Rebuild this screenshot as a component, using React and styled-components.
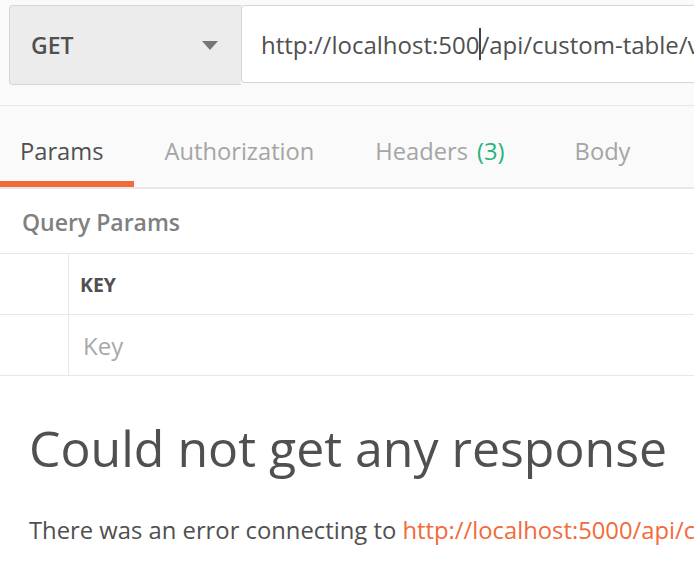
import React from "react";
import styled, { createGlobalStyle } from "styled-components";

const Global = createGlobalStyle`
  html, body { margin: 0; padding: 0; background: #ffffff; }
  body { font-family: "Open Sans", "Noto Sans", sans-serif; color: #505050; overflow: hidden; }
  * { box-sizing: border-box; }
`;

const Page = styled.div`
  width: 694px;
  height: 564px;
  overflow: hidden;
  background: #ffffff;
`;

const TopBar = styled.div`
  display: flex;
  align-items: flex-start;
  height: 106px;
  padding: 5px 0 0 9px;
  background: #fafafa;
  border-bottom: 1px solid #e6e6e6;
`;

const MethodSelect = styled.div`
  width: 232px;
  height: 80px;
  display: flex;
  align-items: center;
  justify-content: space-between;
  padding: 0 23px 0 21px;
  background: #ececec;
  border: 1px solid #d6d6d6;
  border-right: none;
  border-radius: 4px 0 0 4px;
  font-size: 23px;
  font-weight: 600;
  color: #505050;
`;

const Caret = styled.span`
  width: 0;
  height: 0;
  border-left: 8px solid transparent;
  border-right: 8px solid transparent;
  border-top: 9px solid #777777;
`;

const UrlInput = styled.div`
  flex: 1;
  height: 78px;
  display: flex;
  align-items: center;
  padding-left: 19px;
  background: #ffffff;
  border: 1px solid #d6d6d6;
  border-right: none;
  border-radius: 4px 0 0 4px;
  font-size: 24px;
  color: #505050;
  white-space: nowrap;
  overflow: hidden;
`;

const Cursor = styled.span`
  flex: none;
  display: block;
  width: 2px;
  height: 32px;
  background: #444444;
  margin: 0 -1px 0 0;
`;

const TabBar = styled.div`
  display: flex;
  height: 83px;
  background: #fafafa;
  border-bottom: 2px solid #e8e8e8;
`;

const Tab = styled.div`
  display: flex;
  align-items: center;
  height: 81px;
  padding: 14px ${(p) => p.$pr}px 0 ${(p) => p.$pl}px;
  font-size: 23.7px;
  color: ${(p) => (p.$active ? "#505050" : "#a5a5a5")};
  border-bottom: 6px solid ${(p) => (p.$active ? "#f26b3a" : "transparent")};
  white-space: nowrap;
`;

const Count = styled.span`
  color: #26b47f;
  margin-left: 9px;
`;

const SectionTitle = styled.div`
  height: 64px;
  display: flex;
  align-items: center;
  padding: 1px 0 0 22px;
  font-size: 23px;
  font-weight: 600;
  color: #808080;
`;

const Table = styled.div`
  border-top: 1px solid #e8e8e8;
`;

const Row = styled.div`
  display: flex;
  height: 61px;
  border-bottom: 1px solid #e8e8e8;
`;

const HandleCell = styled.div`
  width: 69px;
  border-right: 1px solid #e8e8e8;
`;

const Cell = styled.div`
  flex: 1;
  display: flex;
  align-items: center;
  padding-left: ${(p) => (p.$header ? 11 : 14)}px;
  font-size: ${(p) => (p.$header ? "19.5px" : "24px")};
  font-weight: ${(p) => (p.$header ? 700 : 400)};
  color: ${(p) => (p.$header ? "#505050" : "#a8a8a8")};
`;

const Response = styled.div`
  padding: 32px 0 0 29px;
  white-space: nowrap;
`;

const Heading = styled.div`
  font-size: 50px;
  font-weight: 400;
  color: #505050;
  line-height: 80px;
`;

const Message = styled.div`
  margin-top: 26px;
  font-size: 23.8px;
  color: #505050;
`;

const Link = styled.span`
  color: #f26b3a;
`;

export default function App() {
  return (
    <Page>
      <Global />
      <TopBar>
        <MethodSelect>
          GET
          <Caret />
        </MethodSelect>
        <UrlInput>
          <span>http://localhost:500</span>
          <Cursor />
          <span>/api/custom-table/values</span>
        </UrlInput>
      </TopBar>
      <TabBar>
        <Tab $active $pl={20} $pr={31}>Params</Tab>
        <Tab $pl={30} $pr={31}>Authorization</Tab>
        <Tab $pl={30} $pr={40}>
          Headers<Count>(3)</Count>
        </Tab>
        <Tab $pl={30} $pr={30}>Body</Tab>
      </TabBar>
      <SectionTitle>Query Params</SectionTitle>
      <Table>
        <Row>
          <HandleCell />
          <Cell $header>KEY</Cell>
        </Row>
        <Row>
          <HandleCell />
          <Cell>Key</Cell>
        </Row>
      </Table>
      <Response>
        <Heading>Could not get any response</Heading>
        <Message>
          There was an error connecting to <Link>http://localhost:5000/api/custom-table/values</Link>
        </Message>
      </Response>
    </Page>
  );
}
